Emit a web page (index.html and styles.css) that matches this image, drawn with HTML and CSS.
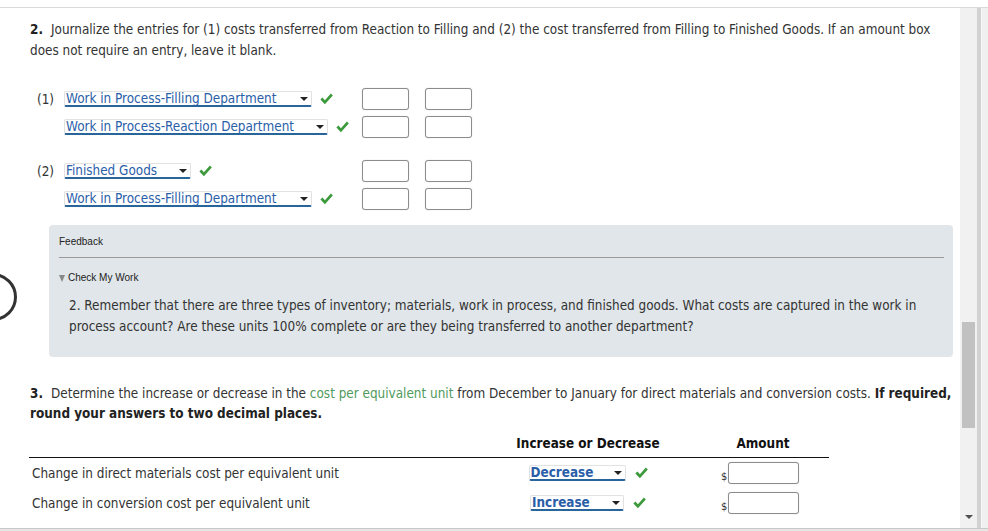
FILE: index.html
```html
<!DOCTYPE html>
<html>
<head>
<meta charset="utf-8">
<link rel="stylesheet" href="styles.css">
</head>
<body>
<div class="window">
  <div class="topbar"></div>
  <div class="middle">
    <main class="content">
      <p class="q"><b class="qn">2.</b>Journalize the entries for (1) costs transferred from Reaction to Filling and (2) the cost transferred from Filling to Finished Goods. If an amount box does not require an entry, leave it blank.</p>

      <div class="journal">
        <div class="jrow">
          <span class="num">(1)</span>
          <span class="acct"><span class="sel s-fill">Work in Process-Filling Department<i class="caret"></i></span><svg class="check" viewBox="0 0 13 12"><path d="M0.4 6.6 L2.4 4.6 L4.9 7.2 L10.9 0.6 L12.8 2.5 L4.9 11.2 Z"/></svg></span>
          <span class="box"></span><span class="box"></span>
        </div>
        <div class="jrow">
          <span class="num"></span>
          <span class="acct"><span class="sel s-react">Work in Process-Reaction Department<i class="caret"></i></span><svg class="check" viewBox="0 0 13 12"><path d="M0.4 6.6 L2.4 4.6 L4.9 7.2 L10.9 0.6 L12.8 2.5 L4.9 11.2 Z"/></svg></span>
          <span class="box"></span><span class="box"></span>
        </div>
        <div class="jrow gap-top">
          <span class="num">(2)</span>
          <span class="acct"><span class="sel s-fg">Finished Goods<i class="caret"></i></span><svg class="check" viewBox="0 0 13 12"><path d="M0.4 6.6 L2.4 4.6 L4.9 7.2 L10.9 0.6 L12.8 2.5 L4.9 11.2 Z"/></svg></span>
          <span class="box"></span><span class="box"></span>
        </div>
        <div class="jrow">
          <span class="num"></span>
          <span class="acct"><span class="sel s-fill">Work in Process-Filling Department<i class="caret"></i></span><svg class="check" viewBox="0 0 13 12"><path d="M0.4 6.6 L2.4 4.6 L4.9 7.2 L10.9 0.6 L12.8 2.5 L4.9 11.2 Z"/></svg></span>
          <span class="box"></span><span class="box"></span>
        </div>
      </div>

      <section class="feedback">
        <div class="fb-title">Feedback</div>
        <hr class="fb-rule">
        <div class="fb-toggle"><span class="tri"></span>Check My Work</div>
        <p class="fb-text">2. Remember that there are three types of inventory; materials, work in process, and finished goods. What costs are captured in the work in process account? Are these units 100% complete or are they being transferred to another department?</p>
      </section>

      <p class="q q3"><b class="qn">3.</b>Determine the increase or decrease in the <span class="term">cost per equivalent unit</span> from December to January for direct materials and conversion costs. <b>If required, round your answers to two decimal places.</b></p>

      <div class="tbl">
        <div class="th"></div>
        <div class="th c">Increase or Decrease</div>
        <div class="th c">Amount</div>

        <div class="td lbl">Change in direct materials cost per equivalent unit</div>
        <div class="td c"><span class="sel bold s-dec">Decrease<i class="caret"></i></span><svg class="check" viewBox="0 0 13 12"><path d="M0.4 6.6 L2.4 4.6 L4.9 7.2 L10.9 0.6 L12.8 2.5 L4.9 11.2 Z"/></svg></div>
        <div class="td c amt"><span class="dollar">$</span><span class="box wide"></span></div>

        <div class="td lbl">Change in conversion cost per equivalent unit</div>
        <div class="td c"><span class="sel bold s-inc">Increase<i class="caret"></i></span><svg class="check" viewBox="0 0 13 12"><path d="M0.4 6.6 L2.4 4.6 L4.9 7.2 L10.9 0.6 L12.8 2.5 L4.9 11.2 Z"/></svg></div>
        <div class="td c amt"><span class="dollar">$</span><span class="box wide"></span></div>
      </div>

      <div class="ring"></div>
    </main>
    <div class="scrollbar">
      <div class="thumb"></div>
      <div class="arrow"></div>
    </div>
    <div class="edge"></div>
    <div class="side"></div>
  </div>
  <div class="bottombar"></div>
</div>
</body>
</html>
```
FILE: styles.css
```css
* { box-sizing: border-box; }
html, body { margin: 0; padding: 0; background: #fff; }
body {
  font-family: "DejaVu Sans Condensed", sans-serif;
  font-size: 13.4px;
  color: #333;
}
.window {
  width: 988px;
  height: 531px;
  display: flex;
  flex-direction: column;
  overflow: hidden;
}
.topbar {
  height: 8px;
  flex: none;
  border-bottom: 1px solid #d9d9d9;
  background: #fff;
}
.middle {
  flex: 1;
  display: flex;
  min-height: 0;
}
.content {
  position: relative;
  width: 960px;
  flex: none;
  padding: 11px 7px 0 30px;
  overflow: hidden;
}
.q {
  margin: 0;
  line-height: 21px;
}
.q b { color: #222; }
.q .qn { margin-right: 8px; }

.journal {
  margin-top: 27px;
  display: flex;
  flex-direction: column;
  gap: 6px;
}
.jrow {
  display: grid;
  grid-template-columns: 34px 298px 47px 63px;
  height: 22px;
  align-items: center;
}
.jrow .box:last-child { margin-left: 16px; }
.gap-top { margin-top: 16px; }
.num { padding-left: 7px; color: #333; }
.acct {
  display: flex;
  align-items: center;
  gap: 8px;
}
.sel {
  display: inline-flex;
  align-items: center;
  justify-content: space-between;
  height: 16px;
  padding: 0 3px 0 1px;
  color: #2a5ea8;
  line-height: 14px;
  border: 1px solid #e2e2e2;
  border-bottom: 2px solid #27659b;
  border-radius: 2px;
  background: #fff;
  white-space: nowrap;
}
.sel.bold { font-weight: bold; }
.s-fill { width: 248px; }
.s-react { width: 264px; }
.s-fg { width: 127px; }
.s-dec { width: 97px; }
.s-inc { width: 94px; }
.caret {
  display: inline-block;
  width: 0;
  height: 0;
  border-left: 4px solid transparent;
  border-right: 4px solid transparent;
  border-top: 4px solid #222;
  margin-left: 6px;
}
.check {
  width: 13px;
  height: 12px;
  flex: none;
  fill: #3c9a3c;
}
.box {
  display: block;
  width: 47px;
  height: 22px;
  border: 1px solid #8c8c8c;
  border-radius: 3px;
  background: #fff;
  box-shadow: 0 0 1px rgba(0,0,0,0.25);
}

.feedback {
  margin: 15px 0 0 19px;
  padding: 10px 9px 20px 10px;
  background: #e0e6e9;
  border-radius: 4px;
}
.fb-title, .fb-toggle {
  font-family: "Liberation Sans", Arial, sans-serif;
  font-size: 10px;
  line-height: 12px;
  color: #222;
}
.fb-title { padding-top: 1px; }
.fb-rule {
  margin: 9px 0 0 0;
  border: none;
  border-top: 1px solid #9a9a9a;
  height: 0;
}
.fb-toggle {
  margin-top: 14px;
  display: flex;
  align-items: center;
}
.tri {
  display: inline-block;
  width: 0;
  height: 0;
  border-left: 3px solid transparent;
  border-right: 3px solid transparent;
  border-top: 7px solid #888;
  margin-right: 3px;
}
.fb-text {
  margin: 11px 0 0 0;
  padding-left: 10px;
  line-height: 21px;
}

.q3 { margin-top: 27px; line-height: 20px; }
.term { color: #4f9a5c; }

.tbl {
  margin-left: -1px;
  margin-top: 12px;
  width: 800px;
  display: grid;
  grid-template-columns: 450px 218px 132px;
}
.th {
  font-weight: bold;
  color: #111;
  line-height: 16px;
  padding-bottom: 5px;
  border-bottom: 1px solid #111;
}
.c { text-align: center; }
.td {
  height: 30px;
  display: flex;
  align-items: center;
}
.td.c { justify-content: center; gap: 9px; }
.td.lbl { padding-left: 3px; color: #333; }
.td.amt { gap: 0; justify-content: flex-start; padding-left: 24px; }
.dollar { font-size: 11px; color: #333; margin-top: 6px; }
.box.wide { width: 71px; height: 22px; margin-left: 1px; }

.ring {
  position: absolute;
  left: -31px;
  top: 265px;
  width: 48px;
  height: 48px;
  border: 3px solid #333;
  border-radius: 50%;
}

.scrollbar {
  width: 17px;
  flex: none;
  background: #f1f1f1;
  display: flex;
  flex-direction: column;
  align-items: center;
}
.thumb {
  margin-top: 314px;
  width: 13px;
  height: 106px;
  background: #c1c1c1;
}
.arrow {
  margin-top: auto;
  margin-bottom: 9px;
  width: 0;
  height: 0;
  border-left: 4px solid transparent;
  border-right: 4px solid transparent;
  border-top: 4px solid #505050;
}
.edge {
  width: 4px;
  flex: none;
  background: #d2d2d2;
}
.side {
  flex: 1;
  background: #f0f0f0;
  border-left: 1px solid #f7f7f7;
}
.bottombar {
  height: 3px;
  flex: none;
  background: #e6e6e6;
  border-top: 1px solid #c8c8c8;
}
```
